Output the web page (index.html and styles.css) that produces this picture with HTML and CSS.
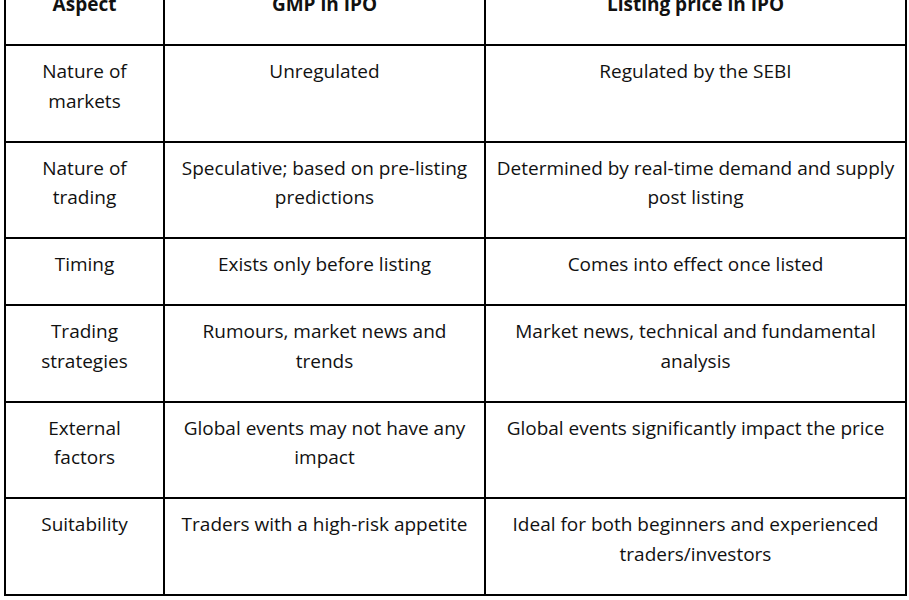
FILE: index.html
```html
<!DOCTYPE html>
<html lang="en">
<head>
<meta charset="utf-8">
<title>GMP vs Listing price in IPO</title>
<link rel="stylesheet" href="styles.css">
</head>
<body>
<table class="cmp">
  <colgroup>
    <col class="c1">
    <col class="c2">
    <col class="c3">
  </colgroup>
  <thead>
    <tr><th>Aspect</th><th>GMP in IPO</th><th>Listing price in IPO</th></tr>
  </thead>
  <tbody>
    <tr><td>Nature of markets</td><td>Unregulated</td><td>Regulated by the SEBI</td></tr>
    <tr><td>Nature of trading</td><td>Speculative; based on pre-listing predictions</td><td>Determined by real-time demand and supply post listing</td></tr>
    <tr><td>Timing</td><td>Exists only before listing</td><td>Comes into effect once listed</td></tr>
    <tr><td>Trading strategies</td><td>Rumours, market news and trends</td><td>Market news, technical and fundamental analysis</td></tr>
    <tr><td>External factors</td><td>Global events may not have any impact</td><td>Global events significantly impact the price</td></tr>
    <tr><td>Suitability</td><td>Traders with a high-risk appetite</td><td>Ideal for both beginners and experienced traders/investors</td></tr>
  </tbody>
</table>
</body>
</html>
```
FILE: styles.css
```css
html, body {
  margin: 0;
  padding: 0;
  background: #fff;
}
body {
  padding: 0 2px 0 4px;
  font-family: "Open Sans", Lato, "Liberation Sans", sans-serif;
  color: #111;
}
.cmp {
  margin-top: -23px;
  border-collapse: collapse;
  table-layout: fixed;
  width: 903px;
  font-size: 19px;
  line-height: 29.5px;
}
.c1 { width: 159px; }
.c2 { width: 321px; }
.c3 { width: 421px; }
.cmp th,
.cmp td {
  border: 2px solid #000;
  padding: 11px 10px 24.5px;
  text-align: center;
  vertical-align: top;
}
.cmp th {
  font-weight: 700;
}
```
